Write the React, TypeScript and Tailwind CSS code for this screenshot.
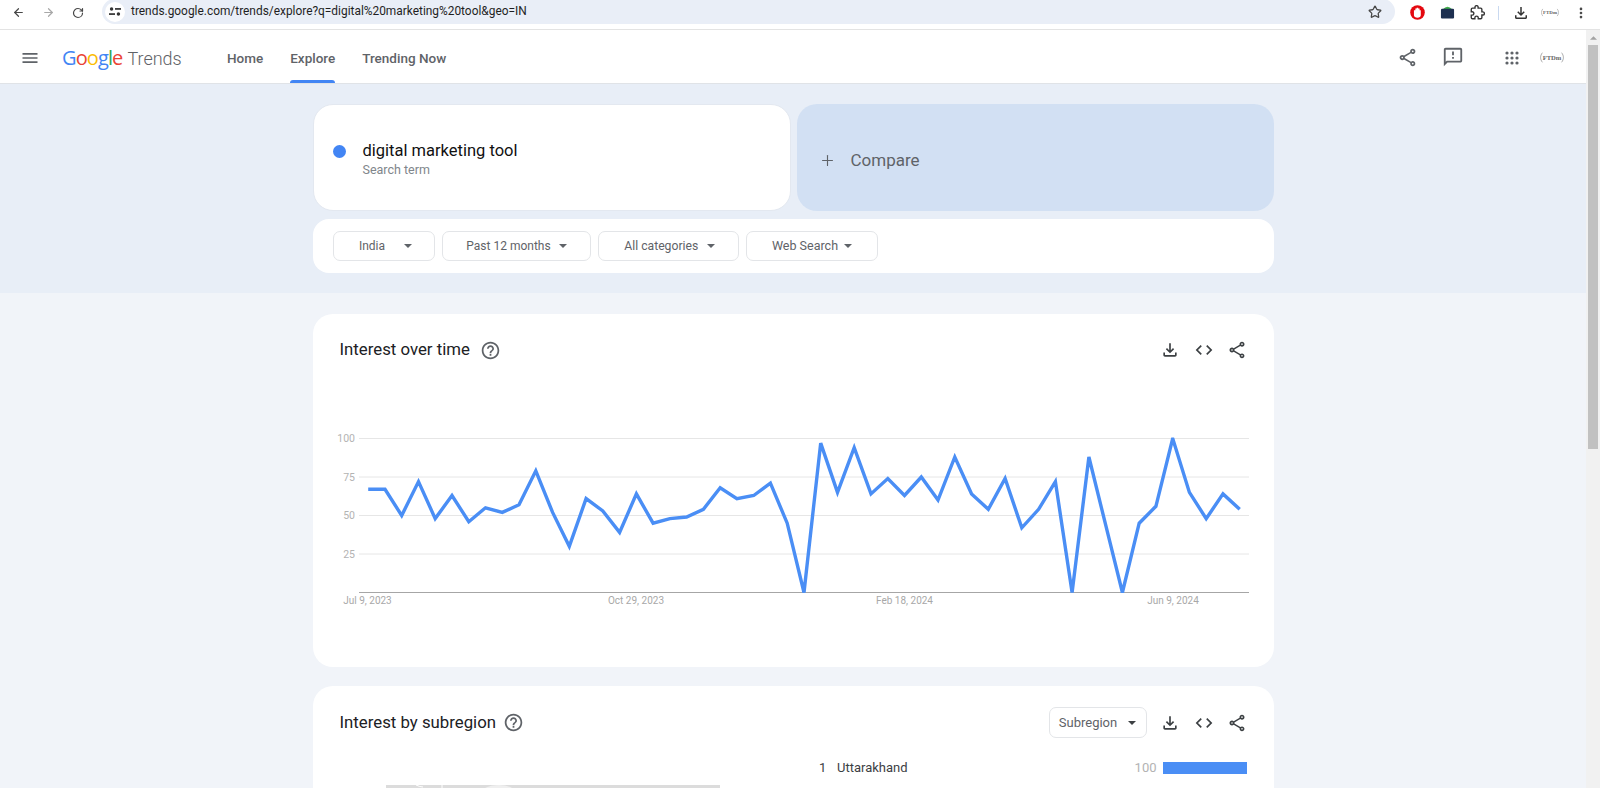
import { ArrowLeft, ArrowRight, RotateCw, Star, MoreVertical, Plus } from "lucide-react";

const ICONS = {
  share:
    "M18 16.08c-.76 0-1.44.3-1.96.77L8.91 12.7c.05-.23.09-.46.09-.7s-.04-.47-.09-.7l7.05-4.11c.54.5 1.25.81 2.04.81 1.66 0 3-1.34 3-3s-1.34-3-3-3-3 1.34-3 3c0 .24.04.47.09.7L8.04 9.81C7.5 9.31 6.79 9 6 9c-1.66 0-3 1.34-3 3s1.34 3 3 3c.79 0 1.5-.31 2.04-.81l7.12 4.16c-.05.21-.08.43-.08.65 0 1.61 1.31 2.92 2.92 2.92s2.92-1.31 2.92-2.92-1.31-2.92-2.92-2.92zM18 4c.55 0 1 .45 1 1s-.45 1-1 1-1-.45-1-1 .45-1 1-1zM6 13c-.55 0-1-.45-1-1s.45-1 1-1 1 .45 1 1-.45 1-1 1zm12 7.02c-.55 0-1-.45-1-1s.45-1 1-1 1 .45 1 1-.45 1-1 1z",
  code: "M9.4 16.6L4.8 12l4.6-4.6L8 6l-6 6 6 6 1.4-1.4zm5.2 0l4.6-4.6-4.6-4.6L16 6l6 6-6 6-1.4-1.4z",
  download:
    "M18 15v3H6v-3H4v3c0 1.1.9 2 2 2h12c1.1 0 2-.9 2-2v-3h-2zm-1-4l-1.41-1.41L13 12.17V4h-2v8.17L8.41 9.59 7 11l5 5 5-5z",
  help: "M11 18h2v-2h-2v2zm1-16C6.48 2 2 6.48 2 12s4.48 10 10 10 10-4.48 10-10S17.52 2 12 2zm0 18c-4.41 0-8-3.59-8-8s3.59-8 8-8 8 3.59 8 8-3.59 8-8 8zm0-14c-2.21 0-4 1.79-4 4h2c0-1.1.9-2 2-2s2 .9 2 2c0 2-3 1.75-3 5h2c0-2.25 3-2.5 3-5 0-2.21-1.79-4-4-4z",
  feedback:
    "M20 2H4c-1.1 0-1.99.9-1.99 2L2 22l4-4h14c1.1 0 2-.9 2-2V4c0-1.1-.9-2-2-2zm0 14H5.17L4 17.17V4h16v12zm-9-4h2v2h-2zm0-6h2v4h-2z",
  menu: "M3 18h18v-2H3v2zm0-5h18v-2H3v2zm0-7v2h18V6H3z",
  extension:
    "M20.5 11H19V7c0-1.1-.9-2-2-2h-4V3.5C13 2.12 11.88 1 10.5 1S8 2.12 8 3.5V5H4c-1.1 0-1.99.9-1.99 2v3.8H3.5c1.49 0 2.7 1.21 2.7 2.7s-1.21 2.7-2.7 2.7H2V20c0 1.1.9 2 2 2h3.8v-1.5c0-1.49 1.21-2.7 2.7-2.7 1.49 0 2.7 1.21 2.7 2.7V22H17c1.1 0 2-.9 2-2v-4h1.5c1.38 0 2.5-1.12 2.5-2.5S21.88 11 20.5 11z",
};

const VALUES = [
  67, 67, 50, 72, 48, 63, 46, 55, 52, 57, 79, 52, 30, 61, 53, 39, 64, 45, 48, 49, 54, 68, 61, 63, 71, 45, 0, 97, 65, 94,
  64, 74, 63, 75, 60, 88, 64, 54, 74, 42, 54, 72, 0, 88, 44, 0, 45, 56, 100, 65, 48, 64, 54,
];

function Icon({ d, className }: { d: string; className: string }) {
  return (
    <svg viewBox="0 0 24 24" fill="currentColor" className={className}>
      <path d={d} />
    </svg>
  );
}

function Caret({ className }: { className?: string }) {
  return (
    <svg viewBox="0 0 10 5" className={`w-[8px] h-[4px] ${className ?? "fill-[#5f6368]"}`}>
      <path d="M0 0h10L5 5z" />
    </svg>
  );
}

function FtdmLogo({ className }: { className: string }) {
  return (
    <svg viewBox="0 0 40 20" className={className} fill="none">
      <path d="M4 2C0 7 0 13 4 18" stroke="#777" strokeWidth="1" />
      <path d="M36 2c4 5 4 11 0 16" stroke="#777" strokeWidth="1" />
      <text x="20" y="14" textAnchor="middle" fontSize="11" fontWeight="700" fill="#666" fontFamily="'Liberation Serif', serif">
        FTDm
      </text>
    </svg>
  );
}

function BrowserBar() {
  return (
    <div className="h-[30px] bg-white border-b border-[#e3e3e3] flex items-start shrink-0">
      <div className="flex items-center h-[25px] w-[102px] pl-[12px] gap-[17px] shrink-0">
        <ArrowLeft className="w-[13px] h-[13px] text-[#474747]" strokeWidth={2.2} />
        <ArrowRight className="w-[13px] h-[13px] text-[#a8a8a8]" strokeWidth={2.2} />
        <RotateCw className="w-[12px] h-[12px] text-[#474747]" strokeWidth={2.4} />
      </div>
      <div className="w-[1293px] h-[25px] bg-[#e9eef7] rounded-r-full rounded-l-full -mt-px flex items-center pl-[3px] pr-[13px]">
        <div className="w-[20px] h-[20px] rounded-full bg-white flex items-center justify-center shrink-0">
          <svg viewBox="0 0 14 10" className="w-[12px] h-[9px]" fill="#333">
            <circle cx="3" cy="2" r="2" />
            <rect x="7" y="1" width="7" height="2" />
            <rect x="0" y="7" width="7" height="2" />
            <circle cx="11" cy="8" r="2" />
          </svg>
        </div>
        <span className="ml-[6px] text-[11.9px] text-[#1f1f1f]">trends.google.com/trends/explore?q=digital%20marketing%20tool&amp;geo=IN</span>
        <Star className="ml-auto w-[14px] h-[14px] text-[#474747]" strokeWidth={2.2} />
      </div>
      <div className="flex items-center h-[25px] flex-1">
        <svg viewBox="0 0 16 16" className="w-[15px] h-[15px] ml-[15px]">
          <circle cx="8" cy="8" r="7.8" fill="#e4080f" />
          <path d="M4.2 5.5h1.5V3.6h1.4v-.6h1.6v.6h1.5v1.9h1.3v5.3c0 1.6-1.4 2.7-3.5 2.7s-3.8-1.1-3.8-2.7z" fill="#fff" />
        </svg>
        <svg viewBox="0 0 16 16" className="w-[15px] h-[15px] ml-[15px]">
          <path d="M3 4.5Q8 -1 13 4.5z" fill="#3fae4a" />
          <rect x="1" y="4" width="14" height="10.5" rx="1.2" fill="#1d3050" />
        </svg>
        <svg viewBox="0 0 24 24" className="w-[15px] h-[15px] ml-[15px]" fill="none" stroke="#333" strokeWidth="2.2">
          <path d={ICONS.extension} />
        </svg>
        <div className="w-px h-[14px] bg-[#c9d9f0] ml-[13px]" />
        <Icon d={ICONS.download} className="w-[18px] h-[18px] ml-[13px] text-[#333]" />
        <FtdmLogo className="w-[18px] h-[9px] ml-[11px]" />
        <MoreVertical className="w-[14px] h-[14px] ml-[15px] text-[#474747]" strokeWidth={2.6} />
      </div>
    </div>
  );
}

function Header() {
  return (
    <header className="h-[54px] pt-[2px] bg-white border-b border-[#e0e3e7] flex items-center shrink-0">
      <Icon d={ICONS.menu} className="w-[20px] h-[20px] ml-[20px] text-[#5f6368]" />
      <div className="ml-[22px] w-[117px] flex items-baseline text-[20px] leading-none font-['Open_Sans',sans-serif] font-medium tracking-[-0.9px]">
        <span className="text-[#4285f4]">G</span>
        <span className="text-[#ea4335]">o</span>
        <span className="text-[#fbbc05]">o</span>
        <span className="text-[#4285f4]">g</span>
        <span className="text-[#34a853]">l</span>
        <span className="text-[#ea4335]">e</span>
        <span className="ml-[5px] text-[#5f6368] text-[18px] font-['Roboto',sans-serif] font-light tracking-normal">Trends</span>
      </div>
      <nav className="ml-[48px] -mt-[2px] flex items-center gap-[27px] text-[13.5px] font-medium text-[#5f6368] h-[54px]">
        <a className="h-full pt-[4px] flex items-center">Home</a>
        <a className="h-full pt-[4px] flex items-center relative">
          Explore
          <span className="absolute left-0 right-0 bottom-px h-[3px] bg-[#4285f4] rounded-t-[3px]" />
        </a>
        <a className="h-full pt-[4px] flex items-center">Trending Now</a>
      </nav>
      <div className="ml-auto flex items-center text-[#5f6368]">
        <Icon d={ICONS.share} className="w-[21px] h-[21px]" />
        <Icon d={ICONS.feedback} className="w-[22px] h-[22px] ml-[24px] -mt-[2px]" />
        <svg viewBox="0 0 14 14" fill="currentColor" className="w-[14px] h-[14px] ml-[41px]">
          {[2, 7, 12].map((y) => [2, 7, 12].map((x) => <circle key={`${x}-${y}`} cx={x} cy={y} r="1.6" />))}
        </svg>
        <FtdmLogo className="w-[24px] h-[13px] ml-[21px] mr-[22px]" />
      </div>
    </header>
  );
}

function FilterButton({ label, className, textSize }: { label: string; className: string; textSize?: string }) {
  return (
    <button className={`${className} h-[30px] rounded-[7px] border border-[#e3e5e8] bg-white flex items-center justify-center text-[#5f6368] ${textSize ?? "text-[12px]"}`}>
      <span>{label}</span>
      <Caret />
    </button>
  );
}

function ActionIcons() {
  return (
    <div className="flex items-center gap-[13.5px] text-[#3c4043]">
      <Icon d={ICONS.download} className="w-[20px] h-[20px]" />
      <Icon d={ICONS.code} className="w-[20px] h-[20px]" />
      <Icon d={ICONS.share} className="w-[20px] h-[20px]" />
    </div>
  );
}

function CardTitle({ title, gap }: { title: string; gap: string }) {
  return (
    <div className="flex items-center">
      <h2 className="text-[16.8px] text-[#202124]">{title}</h2>
      <Icon d={ICONS.help} className={`w-[21px] h-[21px] text-[#5f6368] ${gap}`} />
    </div>
  );
}

function Chart() {
  const w = 961;
  const toY = (v: number) => 13.5 + (100 - v) * 1.54;
  const points = VALUES.map((v, i) => `${(55.2 + i * 16.76).toFixed(1)},${toY(v).toFixed(1)}`).join(" ");
  const labels = [
    { x: 54.5, text: "Jul 9, 2023" },
    { x: 323, text: "Oct 29, 2023" },
    { x: 591.5, text: "Feb 18, 2024" },
    { x: 860, text: "Jun 9, 2024" },
  ];
  return (
    <svg width={w} height={200} viewBox={`0 0 ${w} 200`} className="block mt-[39px]" fontFamily="Roboto, sans-serif">
      <defs>
        <clipPath id="plot">
          <rect x="40" y="12.5" width="900" height="156" />
        </clipPath>
      </defs>
      {[100, 75, 50, 25].map((v) => (
        <g key={v}>
          <line x1="46" x2="936" y1={toY(v)} y2={toY(v)} stroke="#e6e6e6" strokeWidth="1" />
          <text x="42" y={toY(v) + 3.5} textAnchor="end" fontSize="10.5" fill="#b3b3b3">
            {v}
          </text>
        </g>
      ))}
      <line x1="46" x2="936" y1="167.5" y2="167.5" stroke="#a6a6a6" strokeWidth="1" />
      <polyline points={points} fill="none" stroke="#4a8ef5" strokeWidth="3.4" strokeLinejoin="miter" clipPath="url(#plot)" />
      {labels.map((l) => (
        <text key={l.text} x={l.x} y="179" textAnchor="middle" fontSize="10" fill="#a8a8a8">
          {l.text}
        </text>
      ))}
    </svg>
  );
}

function MapPreview() {
  return (
    <svg viewBox="0 0 334 60" className="ml-[73.5px] mt-[47px] w-[334px] h-[60px] shrink-0">
      <rect width="334" height="60" fill="#dcdcdc" />
      <path d="M30 0q4 2 7 2M56 0v4" stroke="#fff" strokeWidth="1" fill="none" />
      <path d="M99 3q6-3 14-3t13 3z" fill="#efefef" />
    </svg>
  );
}

export default function App() {
  return (
    <div className="w-[1600px] h-[788px] overflow-hidden flex flex-col bg-white font-['Roboto',sans-serif]">
      <BrowserBar />
      <div className="flex flex-1 min-h-0">
        <div className="flex-1 min-w-0 flex flex-col bg-[#f1f4f9]">
          <Header />
          <section className="bg-[#e8eef7] pt-[20px] pb-[20px] shrink-0">
            <div className="w-[961px] mx-auto">
              <div className="flex gap-[6px] h-[107px]">
                <div className="w-[478px] bg-white rounded-[20px] border border-[#e3e8f0] flex items-center pl-[19px]">
                  <span className="w-[13px] h-[13px] rounded-full bg-[#4285f4] -mt-[13px]" />
                  <div className="ml-[17px] mt-[4px]">
                    <div className="text-[16.5px] leading-[20px] text-[#111]">digital marketing tool</div>
                    <div className="text-[12.5px] leading-[16px] mt-[1px] text-[#80868b]">Search term</div>
                  </div>
                </div>
                <div className="flex-1 bg-[#d2e0f3] rounded-[20px] flex items-center pl-[22px] pt-[6px] text-[#5f6368]">
                  <Plus className="w-[17px] h-[17px]" strokeWidth={1.6} />
                  <span className="ml-[15px] text-[17px]">Compare</span>
                </div>
              </div>
              <div className="mt-[8px] h-[54px] bg-white rounded-[16px] flex items-center pl-[20.5px]">
                <FilterButton label="India" className="w-[102px] gap-[19px] pl-[3px]" />
                <FilterButton label="Past 12 months" className="w-[149px] gap-[8px] ml-[7px]" />
                <FilterButton label="All categories" className="w-[141.5px] gap-[9px] ml-[6.5px] pl-[3px]" textSize="text-[12.2px]" />
                <FilterButton label="Web Search" className="w-[132px] gap-[6px] ml-[7px]" textSize="text-[12.5px]" />
              </div>
            </div>
          </section>
          <main className="w-[961px] mx-auto pt-[21px] flex flex-col gap-[19px]">
            <section className="h-[353px] bg-white rounded-[20px] shrink-0">
              <div className="h-[72px] flex items-center justify-between pl-[27px] pr-[26.5px]">
                <CardTitle title="Interest over time" gap="ml-[10px]" />
                <ActionIcons />
              </div>
              <Chart />
            </section>
            <section className="bg-white rounded-[20px] shrink-0 h-[200px]">
              <div className="pt-[21px] h-[52px] flex items-center justify-between pl-[27px] pr-[26.5px]">
                <CardTitle title="Interest by subregion" gap="ml-[7px]" />
                <div className="flex items-center gap-[13.5px]">
                  <button className="w-[98px] h-[31px] rounded-[7px] border border-[#e3e5e8] flex items-center justify-center gap-[11px] text-[13px] text-[#5f6368]">
                    <span>Subregion</span>
                    <Caret className="fill-[#3c4043]" />
                  </button>
                  <ActionIcons />
                </div>
              </div>
              <div className="flex">
                <MapPreview />
                <div className="ml-[102px] mt-[22px] flex-1 pr-[27px] h-[16px] flex items-center text-[13px]">
                  <span className="text-[#3c4043] w-[18px] -ml-[3px]">1</span>
                  <span className="text-[#3c4043]">Uttarakhand</span>
                  <span className="ml-auto text-[13px] text-[#b3b3b3]">100</span>
                  <span className="ml-[6px] w-[84px] h-[12px] bg-[#4a8ef5]" />
                </div>
              </div>
            </section>
          </main>
        </div>
        <div className="w-[14px] bg-[#f1f1f1] flex flex-col items-center shrink-0">
          <div className="h-[15px] flex items-center">
            <svg viewBox="0 0 8 4" className="w-[7px] h-[4px] fill-[#a3a3a3]">
              <path d="M0 4l4-4 4 4z" />
            </svg>
          </div>
          <div className="w-[10px] h-[404px] bg-[#c1c1c1]" />
        </div>
      </div>
    </div>
  );
}
